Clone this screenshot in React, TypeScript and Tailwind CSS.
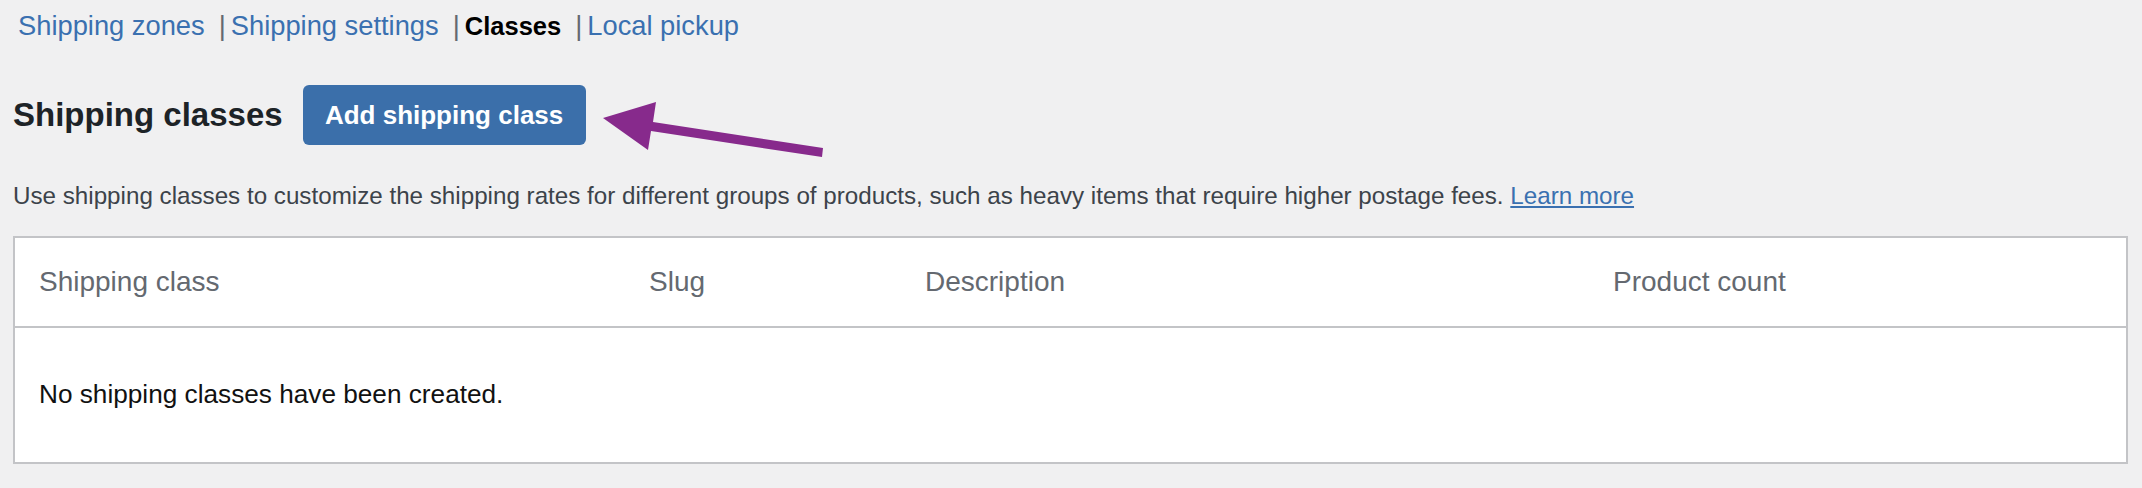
import React from "react";

const tabs = [
  { label: "Shipping zones", current: false },
  { label: "Shipping settings", current: false },
  { label: "Classes", current: true },
  { label: "Local pickup", current: false },
];

const columns = ["Shipping class", "Slug", "Description", "Product count"];

function Arrow() {
  return (
    <svg
      className="pointer-events-none absolute left-[595px] top-[95px]"
      width="235"
      height="70"
      viewBox="595 95 235 70"
      aria-hidden
    >
      <polygon
        points="603,118 656,102 653,122 823,148 822,157 651,131 648,150"
        fill="#872a8c"
      />
    </svg>
  );
}

export default function App() {
  return (
    <div className="relative min-h-[488px] w-full bg-[#f0f0f1] pl-[13px] pr-[14px] font-['Liberation_Sans',Arial,sans-serif]">
      <ul className="ml-[5px] flex h-[52px] items-center text-[27.3px]">
        {tabs.map((t, i) => (
          <li key={t.label} className="flex items-center">
            {t.current ? (
              <span className="text-[25.5px] font-bold text-[#000]">{t.label}</span>
            ) : (
              <a href="#" className="text-[#3a70b0]">
                {t.label}
              </a>
            )}
            {i < tabs.length - 1 && (
              <span className="ml-[14px] mr-[5px] text-[#646970]">|</span>
            )}
          </li>
        ))}
      </ul>

      <div className="mt-[33px] flex h-[60px] items-center gap-[20px]">
        <h2 className="text-[33px] font-bold text-[#1d2327]">Shipping classes</h2>
        <button
          type="button"
          className="flex h-[60px] w-[283px] items-center justify-center rounded-[6px] bg-[#3b6faa] text-[26px] font-bold text-white"
        >
          Add shipping class
        </button>
      </div>

      <p className="mt-[34px] h-[34px] text-[24.2px] leading-[34px] text-[#3c434a]">
        Use shipping classes to customize the shipping rates for different groups of products,
        such as heavy items that require higher postage fees.{" "}
        <a href="#" className="text-[#3a70b0] underline">
          Learn more
        </a>
      </p>

      <div className="mt-[23px] border-2 border-[#c3c4c7] bg-white">
        <div className="grid h-[90px] grid-cols-[610px_276px_688px_1fr] items-center border-b-2 border-[#c3c4c7] text-[28px] text-[#646970]">
          {columns.map((c) => (
            <div key={c} className="px-6">
              {c}
            </div>
          ))}
        </div>
        <div className="flex h-[134px] items-center px-6 text-[26.2px] text-[#111]">
          No shipping classes have been created.
        </div>
      </div>

      <Arrow />
    </div>
  );
}
